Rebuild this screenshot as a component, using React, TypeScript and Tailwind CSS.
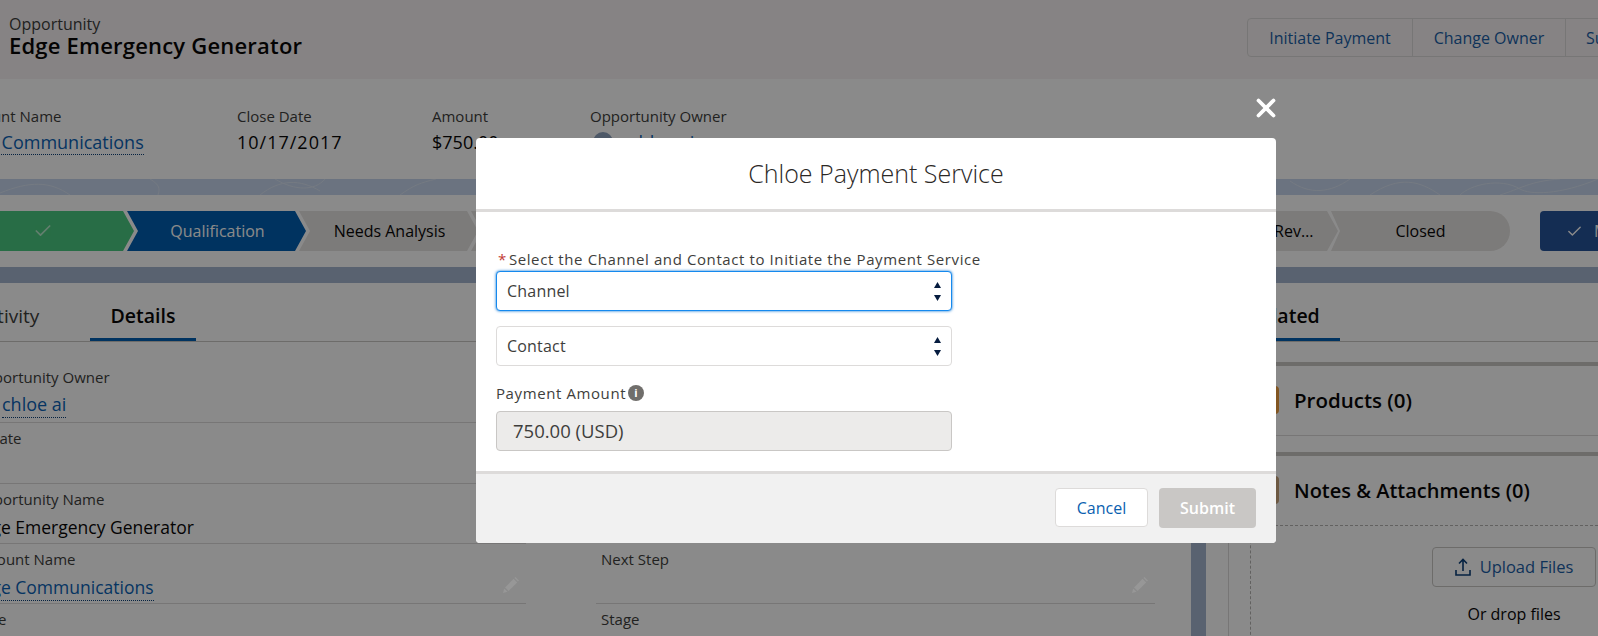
import { Check, X } from "lucide-react";

const steps = [
  "Prospecting",
  "Qualification",
  "Needs Analysis",
  "Value Proposition",
  "Id. Decision Makers",
  "Perception Analysis",
  "Proposal/Price Quote",
  "Negotiation/Review",
];

function Step({ label, index }: { label: string; index: number }) {
  const color =
    index === 0
      ? "bg-[#4bca81] text-white"
      : index === 1
        ? "bg-[#005fb2] text-white"
        : "bg-[#e6e3e1] text-[#080707]";
  return (
    <div
      className={`w-[179px] h-10 shrink-0 -mr-[7px] flex items-center justify-center pb-[1px] pl-[22px] text-[16px] [clip-path:polygon(0_0,calc(100%-11px)_0,100%_50%,calc(100%-11px)_100%,0_100%,11px_50%)] ${color} ${
        index === 7 ? "pr-[22px]" : "pr-[20px]"
      }`}
    >
      {index === 0 ? (
        <Check size={20} className="ml-[-6px] opacity-60" />
      ) : (
        <span className={`truncate ${index === 1 ? "font-medium" : ""}`}>{label}</span>
      )}
    </div>
  );
}

function EditIcon() {
  return (
    <svg
      width="16"
      height="16"
      viewBox="0 0 16 16"
      fill="#979797"
      className="absolute right-[7px] top-[33px] z-10"
    >
      <path d="M0 16l1.200-4.600L4.600 14.800zM2 10.400 10.600 1.800l3.600 3.600L5.600 14zM11.400 1l1-1 3.600 3.600-1 1z" />
    </svg>
  );
}

function Field({
  label,
  value,
  link,
  edit,
  inset,
  tall,
}: {
  label?: string;
  value?: string;
  link?: boolean;
  edit?: boolean;
  inset?: boolean;
  tall?: boolean;
}) {
  return (
    <div className={`border-b border-[#dddbda] pt-[5px] relative ${tall ? "h-[61px]" : "h-[60px]"} ${inset ? "pl-[5px]" : ""}`}>
      <div className="text-[15px] leading-[20px] text-[#3e3e3c]">{label}</div>
      <div className="text-[17.500px] leading-[24px] mt-[6px] -ml-[2px] h-[24px]">
        {link ? (
          <span className="text-[#0b63b5] border-b border-dotted border-[#0b3f78] pb-[1px]">{value}</span>
        ) : (
          <span className="text-[#080707]">{value}</span>
        )}
      </div>
      {edit && <EditIcon />}
    </div>
  );
}

function SelectBox({ label, focus }: { label: string; focus?: boolean }) {
  return (
    <div
      className={`w-[456px] h-[40px] rounded-[4px] bg-white flex items-center justify-between pl-[10px] pr-[10px] text-[16px] tracking-[0.2px] text-[#3e3e3c] border ${
        focus ? "border-[#1589ee] shadow-[0_0_3px_#0070d2]" : "border-[#dddbda]"
      }`}
    >
      <span>{label}</span>
      <svg width="7" height="19" viewBox="0 0 7 19" fill="#061c3f">
        <path d="M3.500 0 7 6H0z" />
        <path d="M0 13h7l-3.500 6z" />
      </svg>
    </div>
  );
}

function Band({ dark }: { dark?: boolean }) {
  return (
    <div className={`h-4 shrink-0 ${dark ? "bg-[#a5b6d0]" : "bg-[#c6d5ec]"} overflow-hidden`}>
      {!dark && (
        <svg width="1598" height="16" fill="none" stroke="#d8e2f1" strokeWidth="1">
          <path d="M0 14C30 2 50 2 70 16M150 0c10 6 10 10 8 16M260 16c20-16 40-16 60-4M275 0c20 12 40 12 50 0M400 16c14-10 20-12 36-16M1290 2c20 14 40 12 60-2M1370 16c30-20 50-14 70 0M1460 16c10-10 40-18 60-6 10 6 40 6 78-10M1500 16c20-6 30-14 60-16" />
        </svg>
      )}
    </div>
  );
}

export default function App() {
  return (
    <div className="relative w-[1598px] h-[636px] overflow-hidden bg-white font-['Open_Sans',sans-serif]">
      {/* page behind the modal */}
      <div className="flex flex-col h-full">
        <div className="h-[79px] shrink-0 bg-[#f7f3f4] flex">
          <div className="w-[1247px] shrink-0 pl-[9px] pt-[14px]">
            <div className="text-[16px] leading-[20px] text-[#3e3e3c]">Opportunity</div>
            <div className="text-[22px] leading-[24px] -mt-[1px] tracking-[0.2px] font-semibold text-[#080707]">Edge Emergency Generator</div>
          </div>
          <div className="mt-[18px] h-[39px] flex shrink-0 border border-[#dddbda] rounded-[4px] bg-[#f7f3f4] text-[16px] text-[#1b5ea6]">
            <div className="w-[165px] flex items-center justify-center border-r border-[#dddbda]">Initiate Payment</div>
            <div className="w-[153px] flex items-center justify-center border-r border-[#dddbda]">Change Owner</div>
            <div className="pl-[20px] pr-4 flex items-center whitespace-nowrap">Submit for Approval</div>
          </div>
        </div>

        <div className="h-[100px] shrink-0 flex pt-[27px]">
          <div className="w-[278px] shrink-0 -ml-[41px]">
            <div className="text-[15px] leading-[20px] text-[#3e3e3c]">Account Name</div>
            <div className="text-[18px] leading-[24px] mt-[4px] -ml-[3px]">
              <span className="text-[#0b63b5] border-b border-dotted border-[#0b3f78]">Edge Communications</span>
            </div>
          </div>
          <div className="w-[195px] shrink-0">
            <div className="text-[15px] leading-[20px] text-[#3e3e3c]">Close Date</div>
            <div className="text-[18px] leading-[24px] tracking-[1px] mt-[4px] text-[#080707]">10/17/2017</div>
          </div>
          <div className="w-[158px] shrink-0">
            <div className="text-[15px] leading-[20px] text-[#3e3e3c]">Amount</div>
            <div className="text-[18px] leading-[24px] mt-[4px] text-[#080707]">$750.00</div>
          </div>
          <div>
            <div className="text-[15px] leading-[20px] text-[#3e3e3c]">Opportunity Owner</div>
            <div className="text-[18px] leading-[24px] mt-[4px] flex items-center gap-[17px]">
              <span className="ml-[3px] w-[20px] h-[20px] rounded-full bg-[#8fa3bf]" />
              <span className="text-[#0b63b5]">chloe ai</span>
            </div>
          </div>
        </div>

        <Band />

        <div className="h-[72px] shrink-0 pt-4 flex">
          <div className="flex -ml-[45px]">
            {steps.map((s, i) => (
              <Step key={s} label={s} index={i} />
            ))}
            <div className="w-[179px] h-10 shrink-0 flex items-center justify-center pb-[1px] text-[16px] text-[#080707] bg-[#e6e3e1] rounded-r-[20px] [clip-path:polygon(0_0,100%_0,100%_100%,0_100%,9px_50%)]">
              Closed
            </div>
          </div>
          <div className="ml-[30px] h-10 w-[240px] shrink-0 rounded-l-[4px] bg-[#265399] text-white text-[16px] flex items-center pl-[26px] gap-[11px]">
            <Check size={17} />
            <span className="whitespace-nowrap">Mark Stage as Complete</span>
          </div>
        </div>

        <Band dark />

        <div className="flex-1 flex min-h-0">
          <div className="w-[1191px] shrink-0">
            <div className="h-[59px] border-b border-[#c9c7c5] flex -ml-[36px] items-end">
              <div className="w-[126px] h-[55px] pt-[15px] text-[19px] leading-[30px] text-[#3e3e3c] pl-[12px]">Activity</div>
              <div className="w-[106px] h-[55px] pt-[15px] border-b-[3px] border-[#005fb2] text-center text-[19.500px] leading-[30px] font-semibold text-[#080707]">
                Details
              </div>
            </div>
            <div className="grid grid-cols-[553px_559px] gap-x-[70px] -ml-[27px]">
              <div className="h-[81px] border-b border-[#dddbda] pt-[25px]">
                <div className="text-[15px] leading-[20px] text-[#3e3e3c]">Opportunity Owner</div>
                <div className="text-[18px] leading-[24px] mt-[5px] pl-[29px]">
                  <span className="text-[#0b63b5] border-b border-dotted border-[#0b3f78] pb-[1px]">chloe ai</span>
                </div>
              </div>
              <div />
              <Field label="Private" tall />
              <div />
              <Field label="Opportunity Name" value="Edge Emergency Generator" />
              <div />
              <Field label="Account Name" value="Edge Communications" link edit />
              <Field label="Next Step" edit inset />
              <Field label="Type" />
              <Field label="Stage" inset />
            </div>
          </div>
          <div className="w-[15px] shrink-0 bg-[#a5b6d0]" />
          <div className="flex-1 min-w-0">
            <div className="h-[59px] border-b border-[#c9c7c5] flex items-end">
              <div className="ml-[30px] w-[104px] h-[55px] pt-[15px] pr-[8px] border-b-[3px] border-[#005fb2] text-center text-[19.500px] leading-[30px] font-semibold text-[#080707]">
                Related
              </div>
            </div>
            <div className="pl-[22px] pt-[20px]">
              <div className="h-[74px] border-t-4 border-b border-[#c9c7c5] border-b-[#dddbda] flex items-center pl-[23px] gap-[15px]">
                <div className="w-[28px] h-[28px] rounded-[4px] bg-[#f09f3f] -mt-[1px]" />
                <div className="text-[20.500px] font-semibold text-[#080707]">Products (0)</div>
              </div>
              <div className="mt-[16px] border-t-4 border-[#c9c7c5] border-l border-l-[#dddbda] h-[200px]">
                <div className="h-[69px] flex items-center pl-[22px] gap-[15px]">
                  <div className="w-[28px] h-[28px] rounded-[4px] bg-[#c9a57c] mt-[-2px]" />
                  <div className="text-[20px] font-semibold text-[#080707] whitespace-nowrap">Notes &amp; Attachments (0)</div>
                </div>
                <div className="ml-[21px] border-t border-l border-dashed border-[#b5b3b1] pl-[181px] pt-[21px] h-[120px]">
                  <div className="w-[164px] h-[40px] rounded-[4px] border border-[#c9c7c5] flex items-center justify-center gap-[9px] text-[16.500px] text-[#1b5ea6]">
                    <svg width="16" height="18" viewBox="0 0 16 18" fill="none" stroke="#0b3f78" strokeWidth="1.6">
                      <path d="M8 13V2M4 5.500 8 1.500l4 4M1 12v5h14v-5" />
                    </svg>
                    Upload Files
                  </div>
                  <div className="w-[164px] text-center text-[16px] leading-[20px] mt-[17px] text-[#080707]">Or drop files</div>
                </div>
              </div>
            </div>
          </div>
        </div>
      </div>

      {/* backdrop */}
      <div className="absolute inset-0 bg-[rgba(0,0,0,0.46)]" />

      {/* modal */}
      <div className="absolute left-[476px] top-[138px] w-[800px] h-[405px] z-20">
        <X size={30} strokeWidth={3} className="absolute right-[-5px] top-[-45px] text-white" />
        <div className="h-full rounded-[4px] bg-white overflow-hidden flex flex-col">
          <div className="h-[74px] shrink-0 border-b-[3px] border-[#dddbda] flex items-center justify-center text-[25px] font-light text-[#2b2826]">
            Chloe Payment Service
          </div>
          <div className="flex-1 pl-[20px] pt-[37px]">
            <div className="text-[15px] tracking-[0.6px] leading-[20px] text-[#3e3e3c] mb-[2px] whitespace-nowrap">
              <span className="text-[#c23934] mr-[2px] ml-[2px]">*</span>
              Select the Channel and Contact to Initiate the Payment Service
            </div>
            <SelectBox label="Channel" focus />
            <div className="h-[15px]" />
            <SelectBox label="Contact" />
            <div className="flex items-center gap-[2px] mt-[17px] mb-[8px] text-[15px] tracking-[0.6px] leading-[20px] text-[#3e3e3c]">
              Payment Amount
              <span className="w-[16px] h-[16px] rounded-full bg-[#706e6b] text-white text-[11px] font-bold leading-[16px] text-center">i</span>
            </div>
            <div className="w-[456px] h-[40px] rounded-[4px] bg-[#ecebea] border border-[#c9c7c5] pl-[16px] flex items-center text-[18.500px] text-[#3e3e3c]">
              750.00 (USD)
            </div>
          </div>
          <div className="h-[72px] shrink-0 border-t-[3px] border-[#dddbda] bg-[#f1f1f1] flex justify-end items-start pt-[14px] pr-[20px] gap-[11px]">
            <div className="w-[93px] h-[39px] rounded-[4px] bg-white border border-[#dddbda] flex items-center justify-center text-[16px] text-[#0b5fb0]">
              Cancel
            </div>
            <div className="w-[97px] h-[40px] rounded-[4px] bg-[#c9c7c5] flex items-center justify-center text-[16px] font-semibold text-white">
              Submit
            </div>
          </div>
        </div>
      </div>
    </div>
  );
}
